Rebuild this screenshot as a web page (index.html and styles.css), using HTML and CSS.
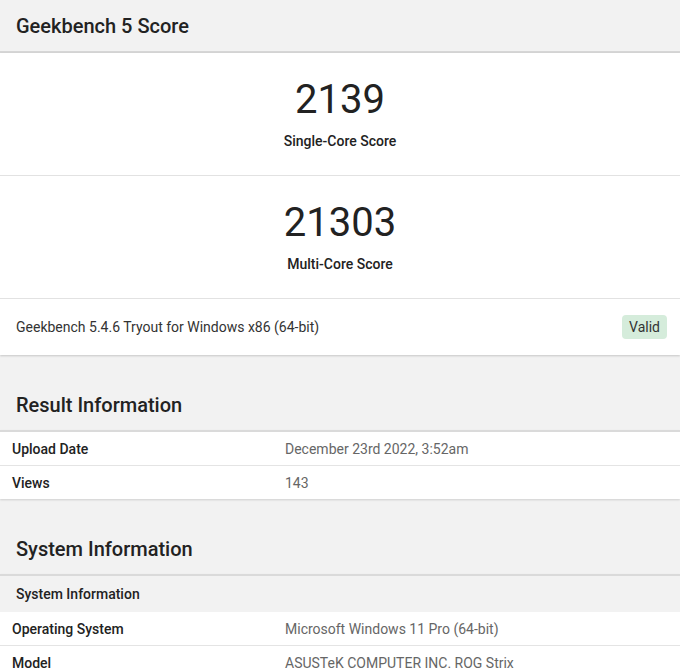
FILE: index.html
```html
<!DOCTYPE html>
<html lang="en">
<head>
    <meta charset="UTF-8">
    <meta name="viewport" content="width=device-width, initial-scale=1.0">
    <title>Geekbench 5 Score</title>
    <link rel="stylesheet" href="styles.css">
</head>
<body>

    <div class="page-header">
        <h1>Geekbench 5 Score</h1>
    </div>

    <div class="score-card">
        <div class="score">
            <div class="score-value">2139</div>
            <div class="score-label">Single-Core Score</div>
        </div>
        <div class="score">
            <div class="score-value">21303</div>
            <div class="score-label">Multi-Core Score</div>
        </div>
        <div class="version-row">
            <span>Geekbench 5.4.6 Tryout for Windows x86 (64-bit)</span>
            <span class="badge-valid">Valid</span>
        </div>
    </div>

    <h2 class="section-title">Result Information</h2>
    <table class="info-table">
        <tr>
            <td class="name">Upload Date</td>
            <td class="value">December 23rd 2022, 3:52am</td>
        </tr>
        <tr>
            <td class="name">Views</td>
            <td class="value">143</td>
        </tr>
    </table>

    <h2 class="section-title">System Information</h2>
    <table class="info-table">
        <tr>
            <th colspan="2">System Information</th>
        </tr>
        <tr>
            <td class="name">Operating System</td>
            <td class="value">Microsoft Windows 11 Pro (64-bit)</td>
        </tr>
        <tr>
            <td class="name">Model</td>
            <td class="value">ASUSTeK COMPUTER INC. ROG Strix</td>
        </tr>
    </table>

</body>
</html>
```

FILE: styles.css
```css
body {
    font-family: Roboto, "Liberation Sans", sans-serif;
    margin: 0;
    background-color: #f2f2f2;
    color: #222;
    font-size: 14px;
}
.page-header {
    height: 51px;
    display: flex;
    align-items: center;
    padding: 0 16px;
    border-bottom: 2px solid #d6d6d6;
}
.page-header h1 {
    margin: 0;
    font-size: 20px;
    font-weight: 500;
}
.score-card {
    background-color: #fff;
    box-shadow: 0 1px 2px rgba(0, 0, 0, 0.18);
}
.score {
    height: 123px;
    border-bottom: 1px solid #e2e2e2;
    display: flex;
    flex-direction: column;
    align-items: center;
    box-sizing: border-box;
    padding-top: 22px;
}
.score-value {
    font-size: 40px;
    line-height: 50px;
    color: #222;
}
.score-label {
    margin-top: 8px;
    font-size: 14px;
    line-height: 16px;
    font-weight: 500;
}
.version-row {
    height: 56px;
    display: flex;
    align-items: center;
    justify-content: space-between;
    padding: 0 13px 0 16px;
    color: #333;
}
.badge-valid {
    background-color: #d5ecdb;
    border-radius: 4px;
    padding: 4px 7px;
    line-height: 16px;
}
.section-title {
    margin: 0;
    padding: 38px 16px 13px;
    font-size: 20px;
    font-weight: 500;
    line-height: 24px;
}
.info-table {
    width: 100%;
    border-collapse: collapse;
    background-color: #fff;
    border-top: 2px solid #dadada;
    box-shadow: 0 1px 2px rgba(0, 0, 0, 0.15);
}
.info-table th {
    background-color: #f2f2f2;
    text-align: left;
    font-weight: 500;
    height: 36px;
    padding: 0 16px;
}
.info-table td {
    height: 33px;
    padding: 0 12px;
    border-bottom: 1px solid #e4e4e4;
}
.info-table tr:last-child td {
    border-bottom: none;
}
.info-table .name {
    width: 249px;
    font-weight: 500;
}
.info-table .value {
    color: #666;
    padding-left: 12px;
}
```
